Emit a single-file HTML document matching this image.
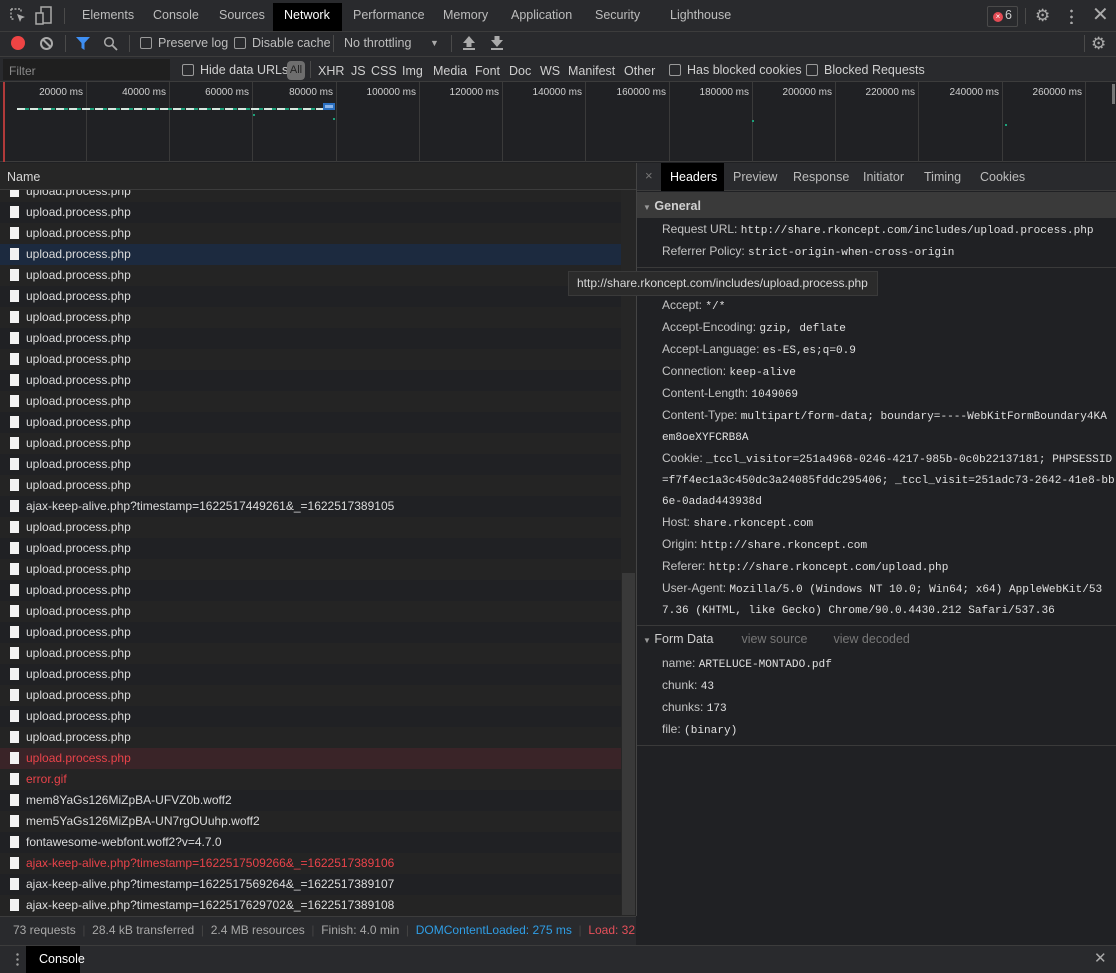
<!DOCTYPE html>
<html><head><meta charset="utf-8"><style>
*{box-sizing:border-box;margin:0;padding:0}
body{width:1116px;height:973px;overflow:hidden;background:#202124;font-family:"Liberation Sans",sans-serif;font-size:12px;color:#d4d4d4;position:relative}
.abs{position:absolute}
.bar{position:absolute;left:0;width:1116px;background:#292a2d;border-bottom:1px solid #3c3c3c}
.t{position:absolute;top:0;line-height:31px;font-size:12.5px;color:#bdbdbd}
.cb{display:inline-block;width:12px;height:12px;border:1px solid #9a9a9a;border-radius:2px;vertical-align:-2px;margin-right:6px}
.sep{position:absolute;width:1px;background:#4a4a4a}
.grid{position:absolute;top:82px;height:80px;width:1px;background:#3a3a3a}
.tl{position:absolute;top:87px;font-size:10px;color:#cfcfcf;text-align:right;width:80px}
.ft{position:absolute;top:64px;font-size:12.5px;color:#cfcfcf}
.row{height:21px;line-height:21px;padding-left:26px;position:relative;color:#dcdcdc;font-size:12px;white-space:nowrap}
.row:before{content:"";position:absolute;left:10px;top:4px;width:9px;height:12px;background:#f2f2f2}
.row:nth-child(odd){background:#242424}
.row:nth-child(even){background:#202124}
.rd{color:#e8434a}
.hl{position:absolute;left:26px;font-size:12px;color:#bfbfbf;white-space:nowrap}
.hl b{font-weight:normal;color:#c4c4c4}
.hl span{font-family:"Liberation Mono",monospace;font-size:11.1px;color:#e0e0e0}
</style></head><body>
<div class="bar" style="top:0;height:32px;background:#292a2d"></div>
<svg class="abs" style="left:9px;top:7px" width="18" height="18" viewBox="0 0 18 18"><path d="M2 2h10v4M2 2v10h4" fill="none" stroke="#aaa" stroke-width="1.4" stroke-dasharray="2 1.5"/><path d="M8 7l8 3-3.5 1.5L11 15z" fill="#aaa"/></svg>
<svg class="abs" style="left:35px;top:6px" width="18" height="20" viewBox="0 0 18 20"><rect x="6" y="1" width="10" height="16" fill="none" stroke="#aaa" stroke-width="1.5"/><rect x="1" y="7" width="7" height="11" fill="#292a2d" stroke="#aaa" stroke-width="1.5"/></svg>
<div class="sep" style="left:64px;top:8px;height:16px"></div>
<div class="t" style="left:82px">Elements</div>
<div class="t" style="left:153px">Console</div>
<div class="t" style="left:219px">Sources</div>
<div class="abs" style="left:273px;top:3px;width:69px;height:28px;background:#000"></div>
<div class="t" style="left:284px;color:#fff">Network</div>
<div class="t" style="left:353px">Performance</div>
<div class="t" style="left:443px">Memory</div>
<div class="t" style="left:511px">Application</div>
<div class="t" style="left:595px">Security</div>
<div class="t" style="left:670px">Lighthouse</div>
<div class="abs" style="left:987px;top:6px;width:31px;height:21px;border:1px solid #4a4a4a;border-radius:2px"></div>
<div class="abs" style="left:993px;top:12px;width:10px;height:10px;border-radius:50%;background:#e34b54;color:#fff;font-size:8px;line-height:10px;text-align:center">×</div>
<div class="t" style="left:1005px;color:#ccc">6</div>
<div class="sep" style="left:1025px;top:8px;height:16px"></div>
<div class="abs" style="left:1035px;top:7px;font-size:17px;color:#aaa;line-height:18px">⚙</div>
<div class="abs" style="left:1070px;top:8px;width:3px;height:16px;background:radial-gradient(circle,#aaa 1.2px,transparent 1.5px) 0 0/3px 6px"></div>
<div class="abs" style="left:1092px;top:4px;font-size:20px;color:#aaa;line-height:22px">✕</div>
<div class="bar" style="top:32px;height:25px"></div>
<div class="abs" style="left:11px;top:36px;width:14px;height:14px;border-radius:50%;background:#ee4444"></div>
<div class="abs" style="left:40px;top:37px;width:13px;height:13px;border-radius:50%;border:2px solid #aaa"></div>
<div class="abs" style="left:41px;top:42px;width:11px;height:2px;background:#aaa;transform:rotate(45deg)"></div>
<div class="sep" style="left:65px;top:35px;height:17px"></div>
<svg class="abs" style="left:76px;top:37px" width="14" height="13" viewBox="0 0 14 13"><path d="M0 0h14L8.5 6v7L5.5 11V6z" fill="#3e8ff3"/></svg>
<svg class="abs" style="left:103px;top:36px" width="15" height="15" viewBox="0 0 15 15"><circle cx="6" cy="6" r="4.3" fill="none" stroke="#aaa" stroke-width="1.5"/><path d="M9 9l5 5" stroke="#aaa" stroke-width="1.8"/></svg>
<div class="sep" style="left:129px;top:35px;height:17px"></div>
<div class="abs" style="left:140px;top:36px;font-size:12.5px;color:#bdbdbd"><span class="cb"></span>Preserve log</div>
<div class="abs" style="left:234px;top:36px;font-size:12.5px;color:#bdbdbd"><span class="cb"></span>Disable cache</div>
<div class="sep" style="left:333px;top:35px;height:17px"></div>
<div class="abs" style="left:344px;top:36px;font-size:12.5px;color:#bdbdbd">No throttling</div>
<div class="abs" style="left:430px;top:38px;font-size:9px;color:#aaa">▼</div>
<div class="sep" style="left:451px;top:35px;height:17px"></div>
<svg class="abs" style="left:463px;top:36px" width="12" height="14" viewBox="0 0 12 14"><path d="M6 0l6 7H8.5v4h-5V7H0z" fill="#aaa"/><rect x="0" y="12" width="12" height="2" fill="#aaa"/></svg>
<svg class="abs" style="left:491px;top:36px" width="12" height="14" viewBox="0 0 12 14"><path d="M6 11l6-7H8.5V0h-5v4H0z" fill="#aaa"/><rect x="0" y="12" width="12" height="2" fill="#aaa"/></svg>
<div class="sep" style="left:1084px;top:35px;height:17px"></div>
<div class="abs" style="left:1091px;top:34px;font-size:17px;color:#aaa">⚙</div>
<div class="bar" style="top:57px;height:25px"></div>
<div class="abs" style="left:3px;top:59px;width:167px;height:21px;background:#1f1f1f"></div>
<div class="abs" style="left:9px;top:64px;color:#8a8a8a">Filter</div>
<div class="abs" style="left:182px;top:63px;font-size:12.5px;color:#cfcfcf"><span class="cb"></span>Hide data URLs</div>
<div class="abs" style="left:287px;top:61px;width:18px;height:19px;border-radius:4px;background:#6e6e6e;color:#222;font-size:11px;text-align:center;line-height:19px">All</div>
<div class="sep" style="left:310px;top:61px;height:17px"></div>
<div class="ft" style="left:318px">XHR</div><div class="ft" style="left:351px">JS</div><div class="ft" style="left:371px">CSS</div><div class="ft" style="left:402px">Img</div><div class="ft" style="left:433px">Media</div><div class="ft" style="left:475px">Font</div><div class="ft" style="left:509px">Doc</div><div class="ft" style="left:540px">WS</div><div class="ft" style="left:568px">Manifest</div><div class="ft" style="left:624px">Other</div>
<div class="abs" style="left:669px;top:63px;font-size:12.5px;color:#cfcfcf"><span class="cb"></span>Has blocked cookies</div>
<div class="abs" style="left:806px;top:63px;font-size:12.5px;color:#cfcfcf"><span class="cb"></span>Blocked Requests</div>
<div class="abs" style="left:0;top:82px;width:1116px;height:80px;background:#202124;border-bottom:1px solid #3c3c3c"></div>
<div class="abs" style="left:3px;top:82px;width:2px;height:80px;background:#b03a3a"></div>
<div class="grid" style="left:86px"></div><div class="grid" style="left:169px"></div><div class="grid" style="left:252px"></div><div class="grid" style="left:336px"></div><div class="grid" style="left:419px"></div><div class="grid" style="left:502px"></div><div class="grid" style="left:585px"></div><div class="grid" style="left:669px"></div><div class="grid" style="left:752px"></div><div class="grid" style="left:835px"></div><div class="grid" style="left:918px"></div><div class="grid" style="left:1002px"></div><div class="grid" style="left:1085px"></div>
<div class="tl" style="left:3px">20000 ms</div><div class="tl" style="left:86px">40000 ms</div><div class="tl" style="left:169px">60000 ms</div><div class="tl" style="left:253px">80000 ms</div><div class="tl" style="left:336px">100000 ms</div><div class="tl" style="left:419px">120000 ms</div><div class="tl" style="left:502px">140000 ms</div><div class="tl" style="left:586px">160000 ms</div><div class="tl" style="left:669px">180000 ms</div><div class="tl" style="left:752px">200000 ms</div><div class="tl" style="left:835px">220000 ms</div><div class="tl" style="left:919px">240000 ms</div><div class="tl" style="left:1002px">260000 ms</div>
<div class="abs" style="left:17px;top:108px;width:306px;height:2px;background:repeating-linear-gradient(90deg,#d8e8e0 0 8px,#1da07a 8px 12px,#2a2a2a 12px 13px)"></div>
<div class="abs" style="left:323px;top:103px;width:12px;height:7px;background:#8ab4e8;border:2px solid #2a6fc0"></div>
<div class="abs" style="left:253px;top:114px;width:2px;height:2px;background:#1da07a"></div>
<div class="abs" style="left:333px;top:118px;width:2px;height:2px;background:#1da07a"></div>
<div class="abs" style="left:752px;top:120px;width:2px;height:2px;background:#1da07a"></div>
<div class="abs" style="left:1005px;top:124px;width:2px;height:2px;background:#1da07a"></div>
<div class="abs" style="left:1112px;top:84px;width:3px;height:20px;background:#777"></div>
<div class="abs" style="left:0;top:163px;width:636px;height:27px;background:#262626;border-bottom:1px solid #3c3c3c"></div>
<div class="abs" style="left:7px;top:170px;font-size:12.5px;color:#d6d6d6">Name</div>
<div class="abs" style="left:0;top:190px;width:621px;height:726px;overflow:hidden">
<div style="margin-top:-9.5px">
<div class="row">upload.process.php</div><div class="row">upload.process.php</div><div class="row">upload.process.php</div>
<div class="row" style="background:#1c2a3f">upload.process.php</div>
<div class="row">upload.process.php</div><div class="row">upload.process.php</div><div class="row">upload.process.php</div><div class="row">upload.process.php</div><div class="row">upload.process.php</div><div class="row">upload.process.php</div><div class="row">upload.process.php</div><div class="row">upload.process.php</div><div class="row">upload.process.php</div><div class="row">upload.process.php</div><div class="row">upload.process.php</div>
<div class="row">ajax-keep-alive.php?timestamp=1622517449261&amp;_=1622517389105</div>
<div class="row">upload.process.php</div><div class="row">upload.process.php</div><div class="row">upload.process.php</div><div class="row">upload.process.php</div><div class="row">upload.process.php</div><div class="row">upload.process.php</div><div class="row">upload.process.php</div><div class="row">upload.process.php</div><div class="row">upload.process.php</div><div class="row">upload.process.php</div><div class="row">upload.process.php</div>
<div class="row rd" style="background:#3a2428">upload.process.php</div>
<div class="row rd">error.gif</div>
<div class="row">mem8YaGs126MiZpBA-UFVZ0b.woff2</div>
<div class="row">mem5YaGs126MiZpBA-UN7rgOUuhp.woff2</div>
<div class="row">fontawesome-webfont.woff2?v=4.7.0</div>
<div class="row rd">ajax-keep-alive.php?timestamp=1622517509266&amp;_=1622517389106</div>
<div class="row">ajax-keep-alive.php?timestamp=1622517569264&amp;_=1622517389107</div>
<div class="row">ajax-keep-alive.php?timestamp=1622517629702&amp;_=1622517389108</div>
</div></div>
<div class="abs" style="left:621px;top:190px;width:15px;height:726px;background:#262626"></div>
<div class="abs" style="left:622px;top:573px;width:13px;height:342px;background:#393939"></div>
<div class="abs" style="left:636px;top:163px;width:1px;height:753px;background:#444"></div>
<div class="abs" style="left:637px;top:163px;width:479px;height:28px;background:#292a2d;border-bottom:1px solid #3c3c3c"></div>
<div class="abs" style="left:645px;top:168px;color:#777;font-size:13px">×</div>
<div class="abs" style="left:661px;top:163px;width:63px;height:28px;background:#000"></div>
<div class="abs" style="left:670px;top:170px;font-size:12.5px;color:#fff">Headers</div>
<div class="abs" style="left:733px;top:170px;font-size:12.5px;color:#bdbdbd">Preview</div>
<div class="abs" style="left:793px;top:170px;font-size:12.5px;color:#bdbdbd">Response</div>
<div class="abs" style="left:863px;top:170px;font-size:12.5px;color:#bdbdbd">Initiator</div>
<div class="abs" style="left:924px;top:170px;font-size:12.5px;color:#bdbdbd">Timing</div>
<div class="abs" style="left:980px;top:170px;font-size:12.5px;color:#bdbdbd">Cookies</div>
<div class="abs" style="left:637px;top:192px;width:479px;height:26px;background:#3a3a3a"></div>
<div class="abs" style="left:643px;top:199px;font-size:12.5px;color:#d0d0d0;font-weight:bold"><span style="font-size:8px;color:#999">▼</span> General</div>
<div class="abs" style="left:637px;top:267px;width:479px;height:1px;background:#3a3a3a"></div>
<div class="abs" style="left:637px;top:625px;width:479px;height:1px;background:#3a3a3a"></div>
<div class="abs" style="left:637px;top:745px;width:479px;height:1px;background:#3a3a3a"></div>
<div style="position:absolute;left:636px;top:0">
<div class="hl" style="top:222px"><b>Request URL:</b> <span>http://share.rkoncept.com/includes/upload.process.php</span></div>
<div class="hl" style="top:244px"><b>Referrer Policy:</b> <span>strict-origin-when-cross-origin</span></div>
<div class="hl" style="top:298px"><b>Accept:</b> <span>*/*</span></div>
<div class="hl" style="top:320px"><b>Accept-Encoding:</b> <span>gzip, deflate</span></div>
<div class="hl" style="top:342px"><b>Accept-Language:</b> <span>es-ES,es;q=0.9</span></div>
<div class="hl" style="top:364px"><b>Connection:</b> <span>keep-alive</span></div>
<div class="hl" style="top:386px"><b>Content-Length:</b> <span>1049069</span></div>
<div class="hl" style="top:408px"><b>Content-Type:</b> <span>multipart/form-data; boundary=----WebKitFormBoundary4KA</span></div>
<div class="hl" style="top:429px"><span>em8oeXYFCRB8A</span></div>
<div class="hl" style="top:451px"><b>Cookie:</b> <span>_tccl_visitor=251a4968-0246-4217-985b-0c0b22137181; PHPSESSID</span></div>
<div class="hl" style="top:472px"><span>=f7f4ec1a3c450dc3a24085fddc295406; _tccl_visit=251adc73-2642-41e8-bb</span></div>
<div class="hl" style="top:493px"><span>6e-0adad443938d</span></div>
<div class="hl" style="top:515px"><b>Host:</b> <span>share.rkoncept.com</span></div>
<div class="hl" style="top:537px"><b>Origin:</b> <span>http://share.rkoncept.com</span></div>
<div class="hl" style="top:559px"><b>Referer:</b> <span>http://share.rkoncept.com/upload.php</span></div>
<div class="hl" style="top:581px"><b>User-Agent:</b> <span>Mozilla/5.0 (Windows NT 10.0; Win64; x64) AppleWebKit/53</span></div>
<div class="hl" style="top:602px"><span>7.36 (KHTML, like Gecko) Chrome/90.0.4430.212 Safari/537.36</span></div>
<div class="hl" style="top:632px;left:7px;color:#d0d0d0;font-size:12.5px"><span style="font-size:8px;color:#999;font-family:'Liberation Sans'">▼</span> Form Data<em style="font-style:normal;color:#777;margin-left:28px">view source</em><em style="font-style:normal;color:#777;margin-left:26px">view decoded</em></div>
<div class="hl" style="top:656px"><b>name:</b> <span>ARTELUCE-MONTADO.pdf</span></div>
<div class="hl" style="top:678px"><b>chunk:</b> <span>43</span></div>
<div class="hl" style="top:700px"><b>chunks:</b> <span>173</span></div>
<div class="hl" style="top:722px"><b>file:</b> <span>(binary)</span></div>
</div>
<div class="abs" style="left:568px;top:271px;width:310px;height:25px;background:#2b2b2b;border:1px solid #3a3a3a;color:#d8d8d8;font-size:12px;line-height:23px;padding-left:8px">http://share.rkoncept.com/includes/upload.process.php</div>
<div class="abs" style="left:0;top:916px;width:636px;height:29px;background:#292a2d;border-top:1px solid #3c3c3c"></div>
<div class="abs" style="left:636px;top:916px;width:480px;height:29px;background:#202124"></div>
<div class="abs" style="left:13px;top:923px;font-size:12px;color:#a8a8a8;white-space:nowrap">73 requests <span style="color:#444">&nbsp;|&nbsp;</span> 28.4 kB transferred <span style="color:#444">&nbsp;|&nbsp;</span> 2.4 MB resources <span style="color:#444">&nbsp;|&nbsp;</span> Finish: 4.0 min <span style="color:#444">&nbsp;|&nbsp;</span> <span style="color:#2f9ee6">DOMContentLoaded: 275 ms</span> <span style="color:#444">&nbsp;|&nbsp;</span> <span style="color:#e5505a">Load: 32</span></div>
<div class="abs" style="left:0;top:945px;width:1116px;height:28px;background:#292a2d;border-top:1px solid #3c3c3c"></div>
<div class="abs" style="left:16px;top:952px;width:3px;height:14px;background:radial-gradient(circle,#999 1.1px,transparent 1.4px) 0 0/3px 5px"></div>
<div class="abs" style="left:26px;top:946px;width:54px;height:27px;background:#000"></div>
<div class="abs" style="left:39px;top:952px;font-size:12.5px;color:#fff">Console</div>
<div class="abs" style="left:1094px;top:949px;font-size:15px;color:#aaa">✕</div>
</body></html>
